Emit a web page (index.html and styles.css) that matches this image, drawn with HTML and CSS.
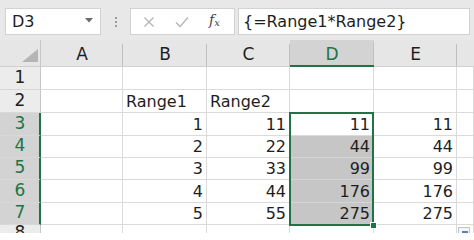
FILE: index.html
```html
<!DOCTYPE html>
<html>
<head>
<meta charset="utf-8">
<link rel="stylesheet" href="styles.css">
</head>
<body>
<div class="app">
  <div class="fbar">
    <div class="namebox">
      <span class="nb-text">D3</span>
      <svg class="nb-arrow" width="8" height="5" viewBox="0 0 8 5"><polygon points="0,0 8,0 4,4.5" fill="#6b6b6b"/></svg>
    </div>
    <div class="grip"><i></i><i></i><i></i></div>
    <div class="fxbox">
      <svg class="ico" width="12" height="12" viewBox="0 0 12 12"><path d="M1.5 1.5 L10.5 10.5 M10.5 1.5 L1.5 10.5" stroke="#b4b4b4" stroke-width="1.3" fill="none"/></svg>
      <svg class="ico" width="14" height="12" viewBox="0 0 14 12"><path d="M1 6.5 L5 10.5 L13 1.5" stroke="#b4b4b4" stroke-width="1.3" fill="none"/></svg>
      <span class="fx">f<sub>x</sub></span>
    </div>
    <div class="formula">{=Range1*Range2}</div>
  </div>
  <div class="sheet">
    <div class="corner"><svg width="16" height="13" viewBox="0 0 16 13"><polygon points="16,0 16,13 0,13" fill="#b5b5b5"/></svg></div>
    <div class="ch">A</div>
    <div class="ch">B</div>
    <div class="ch">C</div>
    <div class="ch sel">D</div>
    <div class="ch">E</div>
    <div class="ch last"></div>

    <div class="rh">1</div>
    <div class="c"></div><div class="c"></div><div class="c"></div><div class="c"></div><div class="c"></div><div class="c"></div>

    <div class="rh">2</div>
    <div class="c"></div><div class="c">Range1</div><div class="c">Range2</div><div class="c"></div><div class="c"></div><div class="c"></div>

    <div class="rh sel">3</div>
    <div class="c"></div><div class="c n">1</div><div class="c n">11</div><div class="c n active">11<span class="selbox"><span class="handle"></span></span></div><div class="c n">11</div><div class="c"></div>

    <div class="rh sel">4</div>
    <div class="c"></div><div class="c n">2</div><div class="c n">22</div><div class="c n hl">44</div><div class="c n">44</div><div class="c"></div>

    <div class="rh sel">5</div>
    <div class="c"></div><div class="c n">3</div><div class="c n">33</div><div class="c n hl">99</div><div class="c n">99</div><div class="c"></div>

    <div class="rh sel">6</div>
    <div class="c"></div><div class="c n">4</div><div class="c n">44</div><div class="c n hl">176</div><div class="c n">176</div><div class="c"></div>

    <div class="rh sel">7</div>
    <div class="c"></div><div class="c n">5</div><div class="c n">55</div><div class="c n hl">275</div><div class="c n">275</div><div class="c"></div>

    <div class="rh">8</div>
    <div class="c"></div><div class="c"></div><div class="c"></div><div class="c"></div><div class="c"></div><div class="c"><span class="qa"></span></div>
  </div>
</div>
</body>
</html>
```
FILE: styles.css
```css
html, body {
  margin: 0;
  padding: 0;
  background: #ffffff;
}
.app {
  width: 474px;
  height: 233px;
  overflow: hidden;
  font-family: "DejaVu Sans", sans-serif;
  color: #1e1e1e;
}
.fbar {
  height: 40px;
  background: #e8e8e8;
  display: flex;
  align-items: flex-start;
  padding-top: 8px;
  box-sizing: border-box;
}
.namebox {
  margin-left: 5px;
  width: 96px;
  height: 27px;
  box-sizing: border-box;
  background: #fff;
  border: 1px solid #d2d2d2;
  display: flex;
  align-items: center;
  justify-content: space-between;
  padding: 0 7px 0 6px;
}
.nb-text {
  font-size: 16px;
  line-height: 18px;
  margin-top: 1px;
}
.nb-arrow {
  margin-top: -3px;
}
.grip {
  width: 29px;
  height: 27px;
  display: flex;
  flex-direction: column;
  align-items: center;
  justify-content: center;
  gap: 2px;
}
.grip i {
  display: block;
  width: 2px;
  height: 2px;
  background: #9c9c9c;
}
.fxbox {
  width: 105px;
  height: 27px;
  box-sizing: border-box;
  background: #fff;
  border: 1px solid #d2d2d2;
  display: flex;
  align-items: center;
  padding-left: 12px;
}
.fxbox .ico:nth-child(2) {
  margin-left: 20px;
}
.fx {
  margin-left: 20px;
  font-family: "DejaVu Serif", "Liberation Serif", serif;
  font-style: italic;
  font-size: 14px;
  color: #444;
  line-height: 14px;
}
.fx sub {
  font-size: 10px;
  vertical-align: -1px;
}
.formula {
  margin-left: 3px;
  flex: 0 0 232px;
  height: 27px;
  box-sizing: border-box;
  background: #fff;
  border: 1px solid #d2d2d2;
  font-size: 16px;
  line-height: 25px;
  padding-left: 4px;
  white-space: nowrap;
}
.sheet {
  display: grid;
  grid-template-columns: 41px 82px 84px 83px 84px 83px 17px;
  grid-template-rows: 27px 23px 23px 23px 22px 22px 23px 22px 20px;
}
.corner {
  background: #e6e6e6;
  border-right: 1px solid #c6c6c6;
  border-bottom: 1px solid #cfcfcf;
  box-sizing: border-box;
  display: flex;
  align-items: flex-end;
  justify-content: flex-end;
  padding: 0 2px 4px 0;
}
.ch {
  background: linear-gradient(#bfbfbf, #bfbfbf) right bottom / 1px 22px no-repeat, #e6e6e6;
  border-bottom: 1px solid #cfcfcf;
  box-sizing: border-box;
  font-size: 17px;
  line-height: 17px;
  display: flex;
  align-items: flex-end;
  justify-content: center;
  padding-bottom: 3px;
  color: #1e1e1e;
}
.ch.sel {
  background: linear-gradient(#bfbfbf, #bfbfbf) right bottom / 1px 22px no-repeat, #d3d3d3;
  color: #217346;
  border-bottom: 2px solid #217346;
  padding-bottom: 2px;
}
.ch.last {
  background: #e6e6e6;
}
.rh {
  background: #ececec;
  border-right: 1px solid #c6c6c6;
  border-bottom: 1px solid #d8d8d8;
  box-sizing: border-box;
  font-size: 17px;
  line-height: 17px;
  display: flex;
  align-items: flex-end;
  justify-content: center;
  padding-bottom: 3px;
}
.rh.sel {
  background: #d3d3d3;
  color: #217346;
  border-right: 2px solid #217346;
  padding-left: 1px;
}
.c {
  border-right: 1px solid #dadada;
  border-bottom: 1px solid #dadada;
  box-sizing: border-box;
  font-size: 16px;
  line-height: 17px;
  display: flex;
  align-items: flex-end;
  padding: 0 3px 2px 3px;
  white-space: nowrap;
  background: #fff;
}
.c.n {
  justify-content: flex-end;
}
.c.hl {
  background: #c6c6c6;
  border-bottom-color: #d6d6d6;
}
.c.active {
  position: relative;
}
.selbox {
  position: absolute;
  left: -1px;
  top: -1px;
  width: 85px;
  height: 114px;
  box-sizing: border-box;
  border: 2px solid #217346;
  z-index: 2;
}
.handle {
  position: absolute;
  right: -5px;
  bottom: -5px;
  width: 5px;
  height: 5px;
  background: #217346;
  border: 1px solid #fff;
}
.qa {
  display: block;
  width: 15px;
  height: 10px;
  margin: 2px 0 0 -2px;
  border: 1px solid #b9c3d3;
  border-bottom: none;
  background: linear-gradient(#5b7fc1, #5b7fc1) 3px 3px / 6px 3px no-repeat, #f4f6fa;
  align-self: flex-start;
}
```
